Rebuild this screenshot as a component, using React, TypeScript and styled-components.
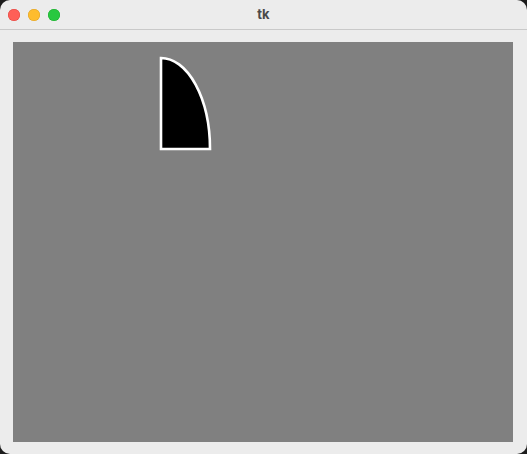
import React from "react";
import styled, { createGlobalStyle } from "styled-components";

const Global = createGlobalStyle`
  html, body { margin: 0; padding: 0; background: #1c1c1c; }
  body { width: 527px; height: 454px; overflow: hidden; }
`;

const Window = styled.div`
  width: 527px;
  height: 454px;
  box-sizing: border-box;
  background: #ececec;
  border-radius: 10px;
  overflow: hidden;
  display: flex;
  flex-direction: column;
`;

const TitleBar = styled.div`
  height: 30px;
  flex: 0 0 auto;
  box-sizing: border-box;
  border-bottom: 1px solid #c9c9c9;
  position: relative;
  display: flex;
  align-items: center;
  justify-content: center;
`;

const Lights = styled.div`
  position: absolute;
  left: 8px;
  top: 9px;
  display: flex;
  gap: 8px;
`;

const Light = styled.span<{ $c: string; $b: string }>`
  width: 12px;
  height: 12px;
  border-radius: 50%;
  background: ${(p) => p.$c};
  box-shadow: inset 0 0 0 0.5px ${(p) => p.$b};
`;

const Title = styled.div`
  font-family: Inter, "Liberation Sans", sans-serif;
  font-weight: 700;
  font-size: 13px;
  color: #4a4a4a;
  margin-top: -1px;
`;

const Content = styled.div`
  padding: 12px 14px 12px 13px;
`;

const Canvas = styled.div`
  width: 500px;
  height: 400px;
  background: #808080;
`;

export default function App() {
  return (
    <>
      <Global />
      <Window>
        <TitleBar>
          <Lights>
            <Light $c="#fe5f57" $b="#e0443e" />
            <Light $c="#febc2e" $b="#dea123" />
            <Light $c="#28c840" $b="#1aab29" />
          </Lights>
          <Title>tk</Title>
        </TitleBar>
        <Content>
          <Canvas>
            <svg width="500" height="400" viewBox="0 0 500 400">
              <path
                d="M148 107 L148 16 A49 91 0 0 1 197 107 Z"
                fill="#000"
                stroke="#fff"
                strokeWidth={2.6}
                strokeLinejoin="miter"
              />
            </svg>
          </Canvas>
        </Content>
      </Window>
    </>
  );
}
